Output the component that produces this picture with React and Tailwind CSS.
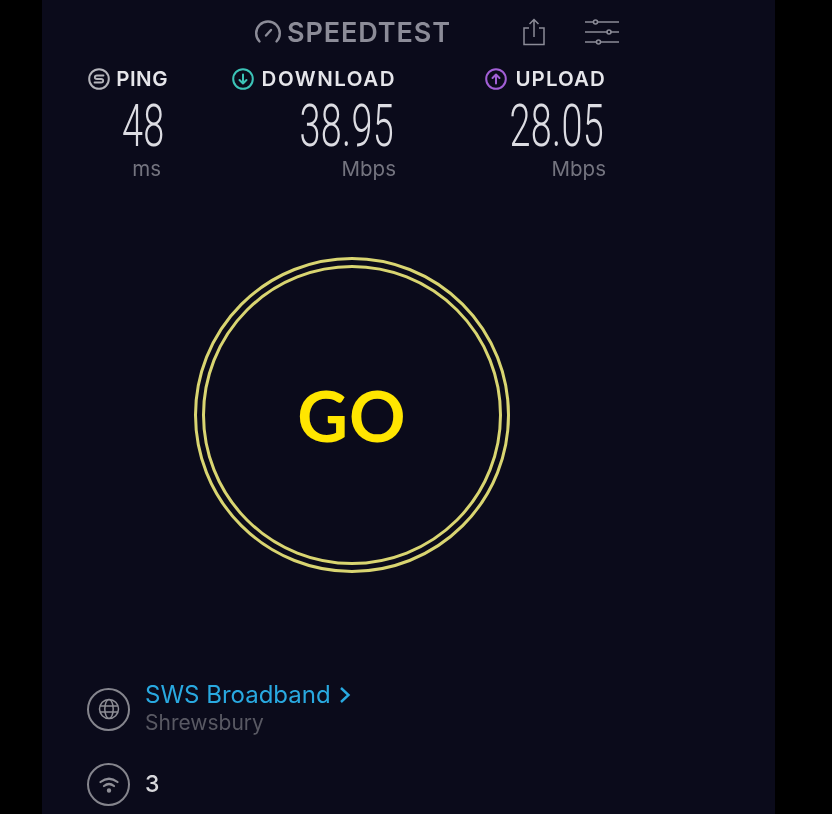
const sans = 'font-[Inter,"Noto_Sans",sans-serif]'

function StatIcon({ color, children }) {
  return (
    <svg width="22" height="22" viewBox="0 0 22 22" fill="none" stroke={color} strokeLinecap="round" strokeLinejoin="round" className="shrink-0">
      <circle cx="11" cy="11" r="9.8" strokeWidth="2" />
      {children}
    </svg>
  )
}

function Stat({ icon, label, value, unit, className, labelClass, valueClass, unitClass }) {
  return (
    <div className={className}>
      <div className="flex items-center justify-between h-[24px]">
        {icon}
        <span className={`text-[20.5px] leading-none font-semibold text-[#e6e6ea] ${labelClass}`}>{label}</span>
      </div>
      <div className={`flex justify-end h-[56px] mt-[7px] ${valueClass}`}>
        <span className="block origin-right scale-x-[0.63] tracking-[0.5px] font-['Roboto',sans-serif] font-light text-[60px] leading-[56px] text-[#dcdce2]">{value}</span>
      </div>
      <div className={`text-right text-[20.5px] leading-[24px] text-[#74747f] mt-[3px] ${unitClass}`}>{unit}</div>
    </div>
  )
}

function RoundIcon({ children }) {
  return (
    <div className="w-[43px] h-[43px] rounded-full border-2 border-[#85858d] flex items-center justify-center shrink-0">
      {children}
    </div>
  )
}

export default function App() {
  return (
    <div className={`w-[832px] h-[814px] bg-black overflow-hidden ${sans}`}>
      <div className="ml-[42px] w-[733px] h-[814px] bg-[#0b0b1b] flex flex-col blur-[0.4px]">
        {/* top bar */}
        <div className="flex items-center h-[32px] mt-[16px] pl-[212px]">
          <svg width="28" height="24" viewBox="0 0 28 24" fill="none" stroke="#8c8c98" strokeWidth="2.4" strokeLinecap="round">
            <path d="M5.5 21.5 A 11.8 11.8 0 1 1 22.5 21.5" />
            <path d="M12 15.5 L17 10" />
          </svg>
          <span className="ml-[5px] text-[27px] leading-none font-semibold text-[#8c8c98] tracking-[0.9px]">SPEEDTEST</span>
          <svg width="24" height="28" viewBox="0 0 24 28" fill="none" stroke="#8c8c98" strokeWidth="1.5" className="ml-[71px]">
            <path d="M7 10 H2 V26.5 H22 V10 H17" />
            <path d="M12 19 V1.5 M7.5 6 L12 1.5 L16.5 6" />
          </svg>
          <svg width="36" height="28" viewBox="0 0 36 28" fill="none" stroke="#8c8c98" strokeWidth="1.6" className="ml-[38px]">
            <path d="M1 4 H9.5 M13.5 4 H35 M1 14 H23 M27 14 H35 M1 24 H12.5 M16.5 24 H35" />
            <circle cx="11.5" cy="4" r="2" />
            <circle cx="25" cy="14" r="2" />
            <circle cx="14.5" cy="24" r="2" />
          </svg>
        </div>

        {/* results */}
        <div className="flex mt-[19px] pl-[46px]">
          <Stat
            className="w-[80px]"
            label="PING"
            value="48"
            unit="ms"
            labelClass="tracking-[0.5px]"
            valueClass="pr-[3px]"
            unitClass="pr-[7px]"
            icon={
              <StatIcon color="#b5b5bb">
                <path d="M15.5 7.5 H9 Q6.8 7.5 6.8 9.3 Q6.8 11 9 11 H13 Q15.2 11 15.2 12.7 Q15.2 14.5 13 14.5 H6.5" strokeWidth="1.8" />
              </StatIcon>
            }
          />
          <Stat
            className="w-[164px] ml-[64px]"
            label="DOWNLOAD"
            value="38.95"
            unit="Mbps"
            labelClass="tracking-[1.5px]"
            valueClass="pr-[2px]"
            icon={
              <StatIcon color="#3cc4b8">
                <path d="M11 6.5 V15.5 M7.5 12 L11 15.5 L14.5 12" strokeWidth="2" />
              </StatIcon>
            }
          />
          <Stat
            className="w-[121px] ml-[89px]"
            label="UPLOAD"
            value="28.05"
            unit="Mbps"
            labelClass="tracking-[1.1px]"
            valueClass="pr-[2px]"
            icon={
              <StatIcon color="#a25fd6">
                <path d="M11 15.5 V6.5 M7.5 10 L11 6.5 L14.5 10" strokeWidth="2" />
              </StatIcon>
            }
          />
        </div>

        {/* go button */}
        <div className="mt-[76px] ml-[152px] w-[316px] h-[316px] rounded-full border-[3px] border-[#d9d571] flex items-center justify-center">
          <div className="w-[300px] h-[300px] rounded-full border-[3px] border-[#d9d571] flex items-center justify-center">
            <span className="text-[70px] leading-none font-bold text-[#ffe600] tracking-[1px] font-['Lato',sans-serif]">GO</span>
          </div>
        </div>

        {/* connection info */}
        <div className="flex items-center gap-[15px] mt-[108px] pl-[45px]">
          <RoundIcon>
            <svg width="22" height="22" viewBox="0 0 22 22" fill="none" stroke="#8f8f97" strokeWidth="1.5">
              <circle cx="11" cy="11" r="9.5" />
              <ellipse cx="11" cy="11" rx="4.2" ry="9.5" />
              <path d="M2 8 H20 M2 14 H20" />
            </svg>
          </RoundIcon>
          <div>
            <div className="flex items-center text-[24px] leading-[28px] text-[#29a9e0]">
              SWS Broadband
              <svg width="12" height="18" viewBox="0 0 12 18" fill="none" stroke="#29a9e0" strokeWidth="2.4" className="ml-[8px]">
                <path d="M2 2 L9.5 9 L2 16" />
              </svg>
            </div>
            <div className="text-[21px] leading-[28px] text-[#595963]">Shrewsbury</div>
          </div>
        </div>
        <div className="flex items-center gap-[15px] mt-[26px] pl-[45px]">
          <RoundIcon>
            <svg width="20" height="16" viewBox="0 0 20 16" fill="none" stroke="#8f8f97" strokeWidth="2.2" strokeLinecap="round">
              <path d="M1.5 5 Q10 -1.5 18.5 5" />
              <path d="M5 9 Q10 5 15 9" />
              <circle cx="10" cy="13.5" r="1.1" fill="#8f8f97" />
            </svg>
          </RoundIcon>
          <span className="text-[23px] leading-none font-medium text-[#d8d8dc]">3</span>
        </div>
      </div>
    </div>
  )
}
